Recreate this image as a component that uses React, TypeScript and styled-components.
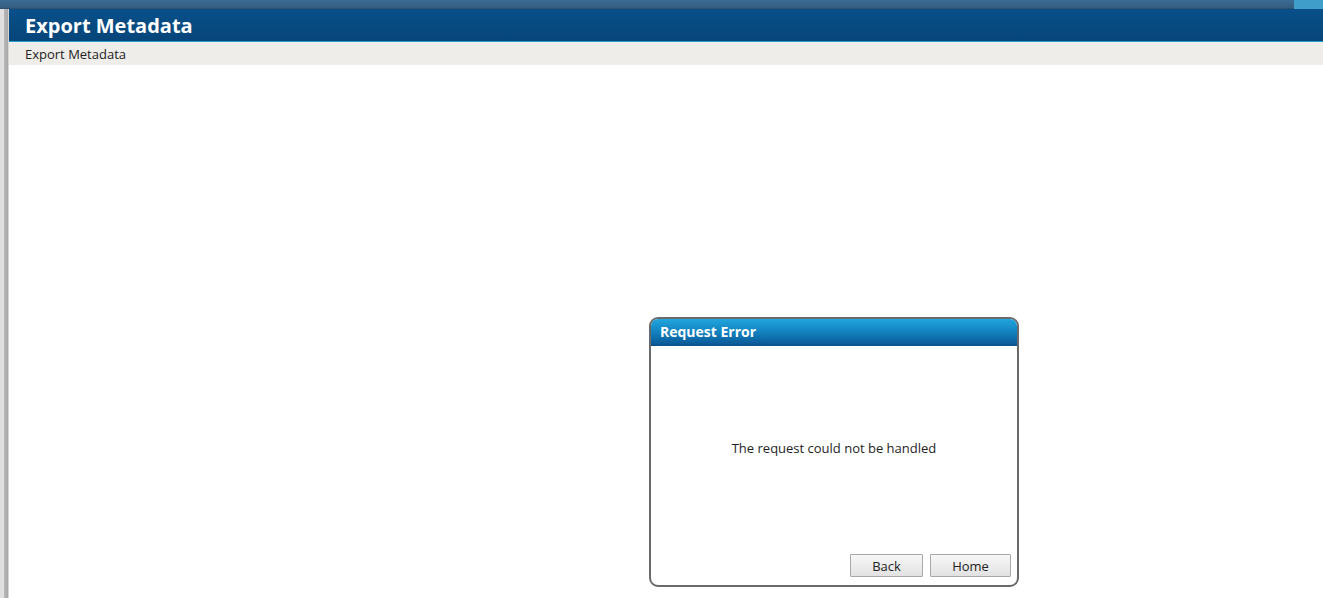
import React from 'react';
import styled, { createGlobalStyle } from 'styled-components';

const GlobalStyle = createGlobalStyle`
	html, body {
		margin: 0;
		padding: 0;
		height: 100%;
		overflow: hidden;
	}
	body {
		font-family: 'Open Sans', 'Liberation Sans', sans-serif;
		background: #ffffff;
	}
	#root {
		height: 100%;
	}
`;

const Page = styled.div`
	display: flex;
	flex-direction: column;
	height: 598px;
	width: 1323px;
`;
const Desktop = styled.div`
	flex: 0 0 9px;
	display: flex;
	flex-direction: row;
	background: linear-gradient(#3b6a92, #355f83 80%, #2c4b66);
`;
const DesktopFill = styled.div`
	flex: 1;
`;
const DesktopCorner = styled.div`
	flex: 0 0 29px;
	background: #3f9fca;
`;
const Main = styled.div`
	flex: 1;
	display: flex;
	flex-direction: row;
	min-height: 0;
`;
const Rail = styled.div`
	flex: 0 0 9px;
	background: linear-gradient(to right, #e0e0e0 0, #e0e0e0 4px, #b8b8b8 4px, #a8a8a8 8px, #d6d6d6 8px);
`;
const Window = styled.div`
	flex: 1;
	display: flex;
	flex-direction: column;
	background: #ffffff;
`;
const TitleBar = styled.div`
	height: 32px;
	display: flex;
	align-items: center;
	padding: 0 16px;
	background: linear-gradient(#0a4f8a, #074a80 60%, #06457a);
	border-bottom: 1px solid #2a9fcc;
	h1 {
		margin: 0;
		font-size: 20px;
		font-weight: 700;
		color: #ffffff;
		letter-spacing: 0;
	}
`;
const Crumbs = styled.div`
	height: 23px;
	display: flex;
	align-items: center;
	padding: 0 16px;
	background: #eeede9;
	font-size: 13px;
	color: #222222;
`;
const Content = styled.div`
	flex: 1;
	padding: 252px 0 0 640px;
`;
const Dialog = styled.div`
	width: 366px;
	height: 266px;
	display: flex;
	flex-direction: column;
	border: 2px solid #6a6a6a;
	border-radius: 9px;
	overflow: hidden;
	background: #ffffff;
`;
const DialogHead = styled.div`
	height: 25px;
	display: flex;
	align-items: center;
	padding: 0 9px;
	background: linear-gradient(#22a5dd, #1387c4 45%, #0a5b98);
	border-bottom: 2px solid #0a5590;
	font-size: 14px;
	font-weight: 700;
	color: #ffffff;
`;
const DialogBody = styled.div`
	flex: 1;
	display: flex;
	align-items: center;
	justify-content: center;
	padding-bottom: 4px;
	font-size: 13px;
	color: #1e1e1e;
`;
const DialogFoot = styled.div`
	display: flex;
	justify-content: flex-end;
	gap: 7px;
	padding: 0 6px 8px 0;
`;
const Button = styled.button<{ $w: number }>`
	width: ${({ $w }) => $w}px;
	height: 23px;
	padding: 0;
	font-family: 'Open Sans', 'Liberation Sans', sans-serif;
	font-size: 13px;
	color: #222222;
	background: linear-gradient(#f7f7f7, #e2e2e2);
	border: 1px solid #a8a8a8;
	border-radius: 1px;
`;

const App: React.FunctionComponent = () => {
	return (
		<Page>
			<GlobalStyle />
			<Desktop>
				<DesktopFill />
				<DesktopCorner />
			</Desktop>
			<Main>
				<Rail />
				<Window>
					<TitleBar>
						<h1>Export Metadata</h1>
					</TitleBar>
					<Crumbs>Export Metadata</Crumbs>
					<Content>
						<Dialog>
							<DialogHead>Request Error</DialogHead>
							<DialogBody>The request could not be handled</DialogBody>
							<DialogFoot>
								<Button $w={73}>Back</Button>
								<Button $w={81}>Home</Button>
							</DialogFoot>
						</Dialog>
					</Content>
				</Window>
			</Main>
		</Page>
	);
};

export default App;
